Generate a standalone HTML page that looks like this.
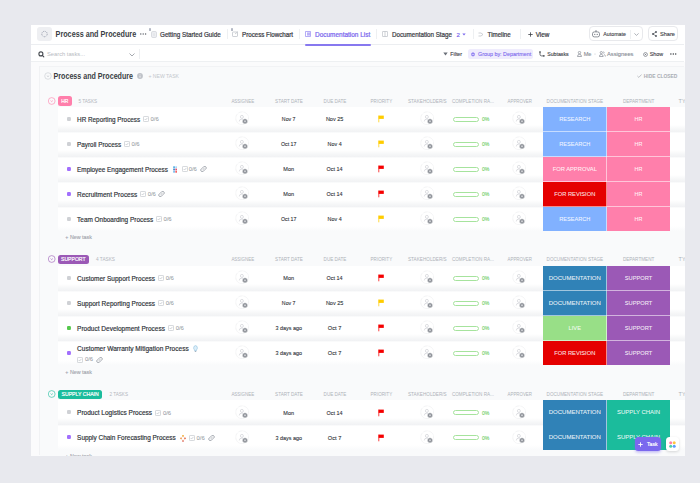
<!DOCTYPE html>
<html><head><meta charset="utf-8"><style>
html,body{margin:0;padding:0;}
body{width:700px;height:483px;overflow:hidden;background:#e8e9ee;position:relative;font-family:"Liberation Sans",sans-serif;}
.b{position:absolute;}
svg text{font-family:"Liberation Sans",sans-serif;}
</style></head><body>
<div class="b" style="left:31.4px;top:24.7px;width:653.2px;height:430.8px;background:#fff"></div>
<div class="b" style="left:31.4px;top:61.5px;width:653.2px;height:394px;background:#fbfbfc"></div>
<div class="b" style="left:39.3px;top:66.3px;width:644.9px;height:0.8px;background:#f2f3f5"></div>
<div class="b" style="left:39.3px;top:66.3px;width:0.8px;height:389px;background:#f1f2f4"></div>
<div class="b" style="left:40.1px;top:67.1px;width:644.5px;height:389px;background:#f9fafb"></div>
<div class="b" style="left:31.4px;top:44.3px;width:652.8px;height:1px;background:#eceef1"></div>
<div class="b" style="left:31.4px;top:60.6px;width:652.8px;height:0.9px;background:#eef0f2"></div>
<div class="b" style="left:37px;top:27px;width:15px;height:14px;background:#eeeff2;border-radius:3px"></div>
<svg class="b" style="left:40px;top:30px" width="9" height="8" viewBox="0 0 9 8"><circle cx="4.5" cy="4" r="2.7" fill="none" stroke="#8f95a6" stroke-width="0.8" stroke-dasharray="1.1 0.7"/></svg>
<svg class="b" style="left:139.6px;top:33px" width="7" height="2" viewBox="0 0 7 2"><g fill="#5b6068"><circle cx="0.8" cy="1" r="0.7"/><circle cx="3.2" cy="1" r="0.7"/><circle cx="5.6" cy="1" r="0.7"/></g></svg>
<div class="b" style="left:148.9px;top:28.4px;width:1.9px;height:2.4px;background:#b3b8c4;border-radius:0.4px"></div>
<svg class="b" style="left:150.5px;top:30.5px" width="6" height="7" viewBox="0 0 6 7"><rect x="0.6" y="0.6" width="4.8" height="5.8" rx="0.9" fill="#f1f2f5" stroke="#c9ccd3" stroke-width="0.7"/><path d="M3 2.2V5" stroke="#c9ccd3" stroke-width="0.6"/></svg>
<div class="b" style="left:227.2px;top:29px;width:0.6px;height:10px;background:#eef0f2"></div>
<div class="b" style="left:230.9px;top:28.4px;width:1.9px;height:2.4px;background:#b3b8c4;border-radius:0.4px"></div>
<svg class="b" style="left:231.5px;top:31px" width="7" height="6" viewBox="0 0 7 6"><rect x="0.5" y="1" width="5" height="4.5" rx="0.6" fill="none" stroke="#b9bdc4" stroke-width="0.7"/><path d="M3 3 L6 0.5" stroke="#b9bdc4" stroke-width="0.7"/></svg>
<div class="b" style="left:299.2px;top:29px;width:0.6px;height:10px;background:#eef0f2"></div>
<svg class="b" style="left:305px;top:31px" width="6" height="6" viewBox="0 0 6 6"><g stroke="#8b7cf0" stroke-width="0.7" fill="none"><rect x="0.4" y="0.4" width="5.2" height="5.2" rx="0.5"/><path d="M2 2H5M2 3H5M2 4H5"/></g></svg>
<div class="b" style="left:305px;top:44.1px;width:65.5px;height:1.5px;background:#8778ef;border-radius:1px"></div>
<div class="b" style="left:376.4px;top:29px;width:0.6px;height:10px;background:#eef0f2"></div>
<svg class="b" style="left:382px;top:31px" width="6" height="6" viewBox="0 0 6 6"><g stroke="#b9bdc4" stroke-width="0.7" fill="none"><rect x="0.4" y="0.5" width="5.2" height="5" rx="0.5"/><path d="M3 0.5V5.5"/></g></svg>
<svg class="b" style="left:462px;top:32.8px" width="4" height="3" viewBox="0 0 4 3"><path d="M0.3 0.4H3.7L2 2.6Z" fill="#7b68ee"/></svg>
<div class="b" style="left:472.8px;top:29px;width:0.6px;height:10px;background:#eef0f2"></div>
<svg class="b" style="left:478px;top:31.5px" width="6" height="5" viewBox="0 0 6 5"><path d="M0.5 1H3L5 2.5 3 4H0.5" fill="none" stroke="#b9bdc4" stroke-width="0.7"/></svg>
<div class="b" style="left:520.3px;top:29px;width:0.6px;height:10px;background:#eef0f2"></div>
<svg class="b" style="left:527.8px;top:31.6px" width="5" height="5" viewBox="0 0 5 5"><path d="M2.5 0.3V4.7M0.3 2.5H4.7" stroke="#3c4046" stroke-width="0.8"/></svg>
<div class="b" style="left:588.6px;top:26.4px;width:54.6px;height:14.6px;border:0.8px solid #e8e9ec;border-radius:4px;box-sizing:border-box;background:#fff"></div>
<svg class="b" style="left:592.4px;top:30px" width="8" height="7.5" viewBox="0 0 8 7.5"><g fill="none" stroke="#6b7079" stroke-width="0.75"><rect x="0.5" y="1.9" width="7" height="5" rx="1.8"/><path d="M4 1.9V0.8"/></g><circle cx="4" cy="0.7" r="0.55" fill="#6b7079"/><circle cx="2.8" cy="4.4" r="0.55" fill="#6b7079"/><circle cx="5.2" cy="4.4" r="0.55" fill="#6b7079"/></svg>
<div class="b" style="left:630px;top:29.5px;width:0.6px;height:9px;background:#eef0f2"></div>
<svg class="b" style="left:633.5px;top:32.5px" width="5" height="3" viewBox="0 0 5 3"><path d="M0.4 0.4L2.5 2.4 4.6 0.4" fill="none" stroke="#8b9099" stroke-width="0.7"/></svg>
<div class="b" style="left:648px;top:26.4px;width:30.3px;height:14.6px;border:0.8px solid #e8e9ec;border-radius:4px;box-sizing:border-box;background:#fff"></div>
<svg class="b" style="left:652.3px;top:31px" width="5" height="6" viewBox="0 0 5 6"><g fill="#4b5058"><circle cx="4" cy="1" r="0.9"/><circle cx="1" cy="3" r="0.9"/><circle cx="4" cy="5" r="0.9"/></g><path d="M4 1L1 3 4 5" stroke="#4b5058" stroke-width="0.6" fill="none"/></svg>
<svg class="b" style="left:37.8px;top:51.3px" width="7" height="7" viewBox="0 0 7 7"><circle cx="2.9" cy="2.9" r="2" fill="none" stroke="#45494f" stroke-width="1.1"/><path d="M4.4 4.4L5.8 5.8" stroke="#45494f" stroke-width="1.1" stroke-linecap="round"/></svg>
<svg class="b" style="left:129px;top:52.6px" width="6" height="4" viewBox="0 0 6 4"><path d="M0.5 0.5L3 3 5.5 0.5" fill="none" stroke="#8f949c" stroke-width="0.8"/></svg>
<div class="b" style="left:139px;top:48.5px;width:0.6px;height:10px;background:#eef0f2"></div>
<svg class="b" style="left:443.2px;top:52px" width="5" height="4" viewBox="0 0 5 4"><path d="M0.3 0.4H4.7L2.5 3.4Z" fill="#6b7079"/></svg>
<div class="b" style="left:468.1px;top:48.5px;width:65px;height:10.4px;background:#efecfd;border-radius:2.5px"></div>
<svg class="b" style="left:470.9px;top:51.6px" width="4" height="5" viewBox="0 0 4 5"><path d="M2 0.3L3.7 1.3V3.5L2 4.6 0.3 3.5V1.3Z" fill="#7b68ee" fill-opacity="0.85"/><circle cx="2" cy="2.45" r="0.7" fill="#efecfd"/></svg>
<svg class="b" style="left:539px;top:51px" width="6" height="6" viewBox="0 0 6 6"><path d="M1 0.6V3.3Q1 4.9 2.6 4.9H5" fill="none" stroke="#45494f" stroke-width="0.8"/><circle cx="1" cy="1" r="0.8" fill="#45494f"/><circle cx="4.9" cy="4.9" r="0.8" fill="#45494f"/></svg>
<svg class="b" style="left:577px;top:51.3px" width="5" height="6" viewBox="0 0 5 6"><circle cx="2.5" cy="1.6" r="1.2" fill="none" stroke="#858a93" stroke-width="0.7"/><path d="M0.5 5.5Q0.5 3.3 2.5 3.3 4.5 3.3 4.5 5.5Z" fill="none" stroke="#858a93" stroke-width="0.7"/></svg>
<svg class="b" style="left:594.4px;top:53.4px" width="2" height="2" viewBox="0 0 2 2"><circle cx="1" cy="1" r="0.5" fill="#b9bcc3"/></svg>
<svg class="b" style="left:599px;top:51.3px" width="7" height="6" viewBox="0 0 7 6"><g fill="none" stroke="#858a93" stroke-width="0.7"><circle cx="2.3" cy="1.6" r="1.1"/><path d="M0.4 5.5Q0.4 3.4 2.3 3.4 4.2 3.4 4.2 5.5Z"/><path d="M4.3 0.6A1.1 1.1 0 0 1 4.5 2.6M5.2 3.5Q6.4 3.9 6.4 5.5"/></g></svg>
<svg class="b" style="left:642.7px;top:51.6px" width="5" height="5" viewBox="0 0 5 5"><circle cx="2.5" cy="2.5" r="1.9" fill="none" stroke="#6b7079" stroke-width="0.7"/><circle cx="2.5" cy="2.5" r="0.6" fill="#6b7079"/></svg>
<svg class="b" style="left:670.3px;top:53px" width="7" height="2" viewBox="0 0 7 2"><g fill="#3c4046"><circle cx="0.9" cy="1" r="0.75"/><circle cx="3.3" cy="1" r="0.75"/><circle cx="5.7" cy="1" r="0.75"/></g></svg>
<svg class="b" style="left:43.6px;top:72.4px" width="8" height="8" viewBox="0 0 8 8"><circle cx="4" cy="4" r="3.3" fill="none" stroke="#cfd2d7" stroke-width="0.7"/><path d="M2.8 3.6L4 4.7 5.2 3.6" fill="none" stroke="#b5b9bf" stroke-width="0.6"/></svg>
<svg class="b" style="left:137.2px;top:72.9px" width="6" height="6" viewBox="0 0 6 6"><circle cx="3" cy="3" r="2.9" fill="#bfc2c8"/><path d="M3 2.6V4.6" stroke="#fff" stroke-width="0.8"/><circle cx="3" cy="1.6" r="0.45" fill="#fff"/></svg>
<svg class="b" style="left:636.8px;top:74.3px" width="5" height="4" viewBox="0 0 5 4"><path d="M0.4 2L1.8 3.4 4.6 0.5" fill="none" stroke="#a3a7ae" stroke-width="0.7"/></svg>
<svg class="b" style="left:48px;top:96.60000000000001px" width="8" height="8" viewBox="0 0 8 8"><circle cx="3.7" cy="4" r="3.4" fill="none" stroke="#ff7fab" stroke-opacity="0.75" stroke-width="0.8"/><path d="M2.6 3.6L3.7 4.6 4.8 3.6" fill="none" stroke="#ff7fab" stroke-width="0.65"/></svg>
<div class="b" style="left:57.8px;top:96.4px;width:14.1px;height:9.3px;background:#ff7fab;border-radius:2.5px"></div>
<div class="b" style="left:57.5px;top:106.5px;width:627.1px;height:25px;background:linear-gradient(#fff 0, #fff 72%, #f5f6f7 90%, #f1f2f4 100%)"></div>
<svg class="b" style="left:66px;top:115.60000000000001px" width="6" height="6" viewBox="0 0 6 6"><rect x="1" y="1.1" width="3.9" height="3.9" rx="1.1" fill="#cfd1d5"/></svg>
<svg class="b" style="left:143.4px;top:116.19999999999999px" width="6" height="6" viewBox="0 0 6 6"><rect x="0.4" y="0.4" width="5.2" height="5.2" rx="1" fill="none" stroke="#b4b8bf" stroke-width="0.6"/><path d="M1.6 3L2.6 4 4.4 1.9" fill="none" stroke="#b4b8bf" stroke-width="0.6"/></svg>
<svg class="b" style="left:235.4px;top:111.3px" width="14" height="14" viewBox="0 0 14 14"><circle cx="7.2" cy="7.3" r="6.4" fill="none" stroke="#dcdee2" stroke-width="0.55" stroke-dasharray="0.7 0.6"/><circle cx="6.9" cy="5.9" r="1.5" fill="none" stroke="#ccced3" stroke-width="0.65"/><path d="M4.3 10.4Q4.3 8.1 6.9 8.1 8.2 8.1 8.8 8.7" fill="none" stroke="#ccced3" stroke-width="0.65"/><circle cx="10" cy="10.3" r="2.6" fill="#8a8e95" stroke="#fff" stroke-width="0.5"/><path d="M10 9.2V11.4M8.9 10.3H11.1" stroke="#eceef0" stroke-width="0.6"/></svg>
<svg class="b" style="left:378.2px;top:114.9px" width="7" height="8" viewBox="0 0 7 8"><path d="M0.8 0.6V7.3" stroke="#ffcc00" stroke-width="1" stroke-opacity="0.75"/><path d="M0.6 0.6H5.8V3.9H0.6Z" fill="#ffcc00"/></svg>
<svg class="b" style="left:420px;top:111.3px" width="14" height="14" viewBox="0 0 14 14"><circle cx="7.2" cy="7.3" r="6.4" fill="none" stroke="#dcdee2" stroke-width="0.55" stroke-dasharray="0.7 0.6"/><circle cx="6.9" cy="5.9" r="1.5" fill="none" stroke="#ccced3" stroke-width="0.65"/><path d="M4.3 10.4Q4.3 8.1 6.9 8.1 8.2 8.1 8.8 8.7" fill="none" stroke="#ccced3" stroke-width="0.65"/><circle cx="10" cy="10.3" r="2.6" fill="#8a8e95" stroke="#fff" stroke-width="0.5"/><path d="M10 9.2V11.4M8.9 10.3H11.1" stroke="#eceef0" stroke-width="0.6"/></svg>
<div class="b" style="left:453.3px;top:116.5px;width:25.7px;height:5.2px;border:1.1px solid #a6e39d;border-radius:3px;box-sizing:border-box;background:#fff"></div>
<svg class="b" style="left:512.2px;top:111.3px" width="14" height="14" viewBox="0 0 14 14"><circle cx="7.2" cy="7.3" r="6.4" fill="none" stroke="#dcdee2" stroke-width="0.55" stroke-dasharray="0.7 0.6"/><circle cx="6.9" cy="5.9" r="1.5" fill="none" stroke="#ccced3" stroke-width="0.65"/><path d="M4.3 10.4Q4.3 8.1 6.9 8.1 8.2 8.1 8.8 8.7" fill="none" stroke="#ccced3" stroke-width="0.65"/><circle cx="10" cy="10.3" r="2.6" fill="#8a8e95" stroke="#fff" stroke-width="0.5"/><path d="M10 9.2V11.4M8.9 10.3H11.1" stroke="#eceef0" stroke-width="0.6"/></svg>
<div class="b" style="left:543px;top:106.5px;width:63.5px;height:25px;background:#81b1ff"></div>
<div class="b" style="left:606.5px;top:106.5px;width:63.5px;height:25px;background:#ff7fab"></div>
<div class="b" style="left:606.2px;top:106.5px;width:0.7px;height:25px;background:rgba(255,255,255,0.55)"></div>
<div class="b" style="left:543px;top:130.8px;width:127px;height:0.8px;background:rgba(255,255,255,0.55)"></div>
<div class="b" style="left:57.5px;top:131.5px;width:627.1px;height:25px;background:linear-gradient(#f7f8f9 0, #fff 6%, #fff 72%, #f5f6f7 90%, #f1f2f4 100%)"></div>
<svg class="b" style="left:66px;top:140.6px" width="6" height="6" viewBox="0 0 6 6"><rect x="1" y="1.1" width="3.9" height="3.9" rx="1.1" fill="#cfd1d5"/></svg>
<svg class="b" style="left:124.3px;top:141.2px" width="6" height="6" viewBox="0 0 6 6"><rect x="0.4" y="0.4" width="5.2" height="5.2" rx="1" fill="none" stroke="#b4b8bf" stroke-width="0.6"/><path d="M1.6 3L2.6 4 4.4 1.9" fill="none" stroke="#b4b8bf" stroke-width="0.6"/></svg>
<svg class="b" style="left:235.4px;top:136.29999999999998px" width="14" height="14" viewBox="0 0 14 14"><circle cx="7.2" cy="7.3" r="6.4" fill="none" stroke="#dcdee2" stroke-width="0.55" stroke-dasharray="0.7 0.6"/><circle cx="6.9" cy="5.9" r="1.5" fill="none" stroke="#ccced3" stroke-width="0.65"/><path d="M4.3 10.4Q4.3 8.1 6.9 8.1 8.2 8.1 8.8 8.7" fill="none" stroke="#ccced3" stroke-width="0.65"/><circle cx="10" cy="10.3" r="2.6" fill="#8a8e95" stroke="#fff" stroke-width="0.5"/><path d="M10 9.2V11.4M8.9 10.3H11.1" stroke="#eceef0" stroke-width="0.6"/></svg>
<svg class="b" style="left:378.2px;top:139.89999999999998px" width="7" height="8" viewBox="0 0 7 8"><path d="M0.8 0.6V7.3" stroke="#ffcc00" stroke-width="1" stroke-opacity="0.75"/><path d="M0.6 0.6H5.8V3.9H0.6Z" fill="#ffcc00"/></svg>
<svg class="b" style="left:420px;top:136.29999999999998px" width="14" height="14" viewBox="0 0 14 14"><circle cx="7.2" cy="7.3" r="6.4" fill="none" stroke="#dcdee2" stroke-width="0.55" stroke-dasharray="0.7 0.6"/><circle cx="6.9" cy="5.9" r="1.5" fill="none" stroke="#ccced3" stroke-width="0.65"/><path d="M4.3 10.4Q4.3 8.1 6.9 8.1 8.2 8.1 8.8 8.7" fill="none" stroke="#ccced3" stroke-width="0.65"/><circle cx="10" cy="10.3" r="2.6" fill="#8a8e95" stroke="#fff" stroke-width="0.5"/><path d="M10 9.2V11.4M8.9 10.3H11.1" stroke="#eceef0" stroke-width="0.6"/></svg>
<div class="b" style="left:453.3px;top:141.5px;width:25.7px;height:5.2px;border:1.1px solid #a6e39d;border-radius:3px;box-sizing:border-box;background:#fff"></div>
<svg class="b" style="left:512.2px;top:136.29999999999998px" width="14" height="14" viewBox="0 0 14 14"><circle cx="7.2" cy="7.3" r="6.4" fill="none" stroke="#dcdee2" stroke-width="0.55" stroke-dasharray="0.7 0.6"/><circle cx="6.9" cy="5.9" r="1.5" fill="none" stroke="#ccced3" stroke-width="0.65"/><path d="M4.3 10.4Q4.3 8.1 6.9 8.1 8.2 8.1 8.8 8.7" fill="none" stroke="#ccced3" stroke-width="0.65"/><circle cx="10" cy="10.3" r="2.6" fill="#8a8e95" stroke="#fff" stroke-width="0.5"/><path d="M10 9.2V11.4M8.9 10.3H11.1" stroke="#eceef0" stroke-width="0.6"/></svg>
<div class="b" style="left:543px;top:131.5px;width:63.5px;height:25px;background:#81b1ff"></div>
<div class="b" style="left:606.5px;top:131.5px;width:63.5px;height:25px;background:#ff7fab"></div>
<div class="b" style="left:606.2px;top:131.5px;width:0.7px;height:25px;background:rgba(255,255,255,0.55)"></div>
<div class="b" style="left:543px;top:155.8px;width:127px;height:0.8px;background:rgba(255,255,255,0.55)"></div>
<div class="b" style="left:57.5px;top:156.5px;width:627.1px;height:25px;background:linear-gradient(#f7f8f9 0, #fff 6%, #fff 72%, #f5f6f7 90%, #f1f2f4 100%)"></div>
<svg class="b" style="left:66px;top:165.6px" width="6" height="6" viewBox="0 0 6 6"><rect x="1" y="1.1" width="3.9" height="3.9" rx="1.1" fill="#a26ffd"/></svg>
<svg class="b" style="left:173.2px;top:165.7px" width="5" height="7" viewBox="0 0 5 7"><rect x="0.3" y="0.3" width="1.5" height="1.8" fill="#3aa0e0"/><rect x="2.4" y="0.3" width="1.5" height="1.8" fill="#9fd4f4"/><rect x="0.3" y="2.6" width="1.5" height="1.8" fill="#1e6fc0"/><rect x="2.4" y="2.6" width="1.5" height="1.8" fill="#e04060"/><rect x="0.3" y="4.9" width="1.5" height="1.8" fill="#60b0e8"/><rect x="2.4" y="4.9" width="1.5" height="1.8" fill="#f05050"/></svg>
<svg class="b" style="left:182.3px;top:166.2px" width="6" height="6" viewBox="0 0 6 6"><rect x="0.4" y="0.4" width="5.2" height="5.2" rx="1" fill="none" stroke="#b4b8bf" stroke-width="0.6"/><path d="M1.6 3L2.6 4 4.4 1.9" fill="none" stroke="#b4b8bf" stroke-width="0.6"/></svg>
<svg class="b" style="left:199.6px;top:166.2px" width="7" height="6" viewBox="0 0 7 6"><g transform="rotate(-40 3.5 3)"><rect x="0.3" y="1.5" width="6.4" height="3" rx="1.5" fill="none" stroke="#a9adb4" stroke-width="0.9"/><path d="M2.3 3H4.9" stroke="#a9adb4" stroke-width="0.8"/></g></svg>
<svg class="b" style="left:235.4px;top:161.29999999999998px" width="14" height="14" viewBox="0 0 14 14"><circle cx="7.2" cy="7.3" r="6.4" fill="none" stroke="#dcdee2" stroke-width="0.55" stroke-dasharray="0.7 0.6"/><circle cx="6.9" cy="5.9" r="1.5" fill="none" stroke="#ccced3" stroke-width="0.65"/><path d="M4.3 10.4Q4.3 8.1 6.9 8.1 8.2 8.1 8.8 8.7" fill="none" stroke="#ccced3" stroke-width="0.65"/><circle cx="10" cy="10.3" r="2.6" fill="#8a8e95" stroke="#fff" stroke-width="0.5"/><path d="M10 9.2V11.4M8.9 10.3H11.1" stroke="#eceef0" stroke-width="0.6"/></svg>
<svg class="b" style="left:378.2px;top:164.89999999999998px" width="7" height="8" viewBox="0 0 7 8"><path d="M0.8 0.6V7.3" stroke="#f50000" stroke-width="1" stroke-opacity="0.75"/><path d="M0.6 0.6H5.8V3.9H0.6Z" fill="#f50000"/></svg>
<svg class="b" style="left:420px;top:161.29999999999998px" width="14" height="14" viewBox="0 0 14 14"><circle cx="7.2" cy="7.3" r="6.4" fill="none" stroke="#dcdee2" stroke-width="0.55" stroke-dasharray="0.7 0.6"/><circle cx="6.9" cy="5.9" r="1.5" fill="none" stroke="#ccced3" stroke-width="0.65"/><path d="M4.3 10.4Q4.3 8.1 6.9 8.1 8.2 8.1 8.8 8.7" fill="none" stroke="#ccced3" stroke-width="0.65"/><circle cx="10" cy="10.3" r="2.6" fill="#8a8e95" stroke="#fff" stroke-width="0.5"/><path d="M10 9.2V11.4M8.9 10.3H11.1" stroke="#eceef0" stroke-width="0.6"/></svg>
<div class="b" style="left:453.3px;top:166.5px;width:25.7px;height:5.2px;border:1.1px solid #a6e39d;border-radius:3px;box-sizing:border-box;background:#fff"></div>
<svg class="b" style="left:512.2px;top:161.29999999999998px" width="14" height="14" viewBox="0 0 14 14"><circle cx="7.2" cy="7.3" r="6.4" fill="none" stroke="#dcdee2" stroke-width="0.55" stroke-dasharray="0.7 0.6"/><circle cx="6.9" cy="5.9" r="1.5" fill="none" stroke="#ccced3" stroke-width="0.65"/><path d="M4.3 10.4Q4.3 8.1 6.9 8.1 8.2 8.1 8.8 8.7" fill="none" stroke="#ccced3" stroke-width="0.65"/><circle cx="10" cy="10.3" r="2.6" fill="#8a8e95" stroke="#fff" stroke-width="0.5"/><path d="M10 9.2V11.4M8.9 10.3H11.1" stroke="#eceef0" stroke-width="0.6"/></svg>
<div class="b" style="left:543px;top:156.5px;width:63.5px;height:25px;background:#ff7fab"></div>
<div class="b" style="left:606.5px;top:156.5px;width:63.5px;height:25px;background:#ff7fab"></div>
<div class="b" style="left:606.2px;top:156.5px;width:0.7px;height:25px;background:rgba(255,255,255,0.55)"></div>
<div class="b" style="left:543px;top:180.8px;width:127px;height:0.8px;background:rgba(255,255,255,0.55)"></div>
<div class="b" style="left:57.5px;top:181.5px;width:627.1px;height:25px;background:linear-gradient(#f7f8f9 0, #fff 6%, #fff 72%, #f5f6f7 90%, #f1f2f4 100%)"></div>
<svg class="b" style="left:66px;top:190.6px" width="6" height="6" viewBox="0 0 6 6"><rect x="1" y="1.1" width="3.9" height="3.9" rx="1.1" fill="#a26ffd"/></svg>
<svg class="b" style="left:140px;top:191.2px" width="6" height="6" viewBox="0 0 6 6"><rect x="0.4" y="0.4" width="5.2" height="5.2" rx="1" fill="none" stroke="#b4b8bf" stroke-width="0.6"/><path d="M1.6 3L2.6 4 4.4 1.9" fill="none" stroke="#b4b8bf" stroke-width="0.6"/></svg>
<svg class="b" style="left:158.4px;top:191.2px" width="7" height="6" viewBox="0 0 7 6"><g transform="rotate(-40 3.5 3)"><rect x="0.3" y="1.5" width="6.4" height="3" rx="1.5" fill="none" stroke="#a9adb4" stroke-width="0.9"/><path d="M2.3 3H4.9" stroke="#a9adb4" stroke-width="0.8"/></g></svg>
<svg class="b" style="left:235.4px;top:186.29999999999998px" width="14" height="14" viewBox="0 0 14 14"><circle cx="7.2" cy="7.3" r="6.4" fill="none" stroke="#dcdee2" stroke-width="0.55" stroke-dasharray="0.7 0.6"/><circle cx="6.9" cy="5.9" r="1.5" fill="none" stroke="#ccced3" stroke-width="0.65"/><path d="M4.3 10.4Q4.3 8.1 6.9 8.1 8.2 8.1 8.8 8.7" fill="none" stroke="#ccced3" stroke-width="0.65"/><circle cx="10" cy="10.3" r="2.6" fill="#8a8e95" stroke="#fff" stroke-width="0.5"/><path d="M10 9.2V11.4M8.9 10.3H11.1" stroke="#eceef0" stroke-width="0.6"/></svg>
<svg class="b" style="left:378.2px;top:189.89999999999998px" width="7" height="8" viewBox="0 0 7 8"><path d="M0.8 0.6V7.3" stroke="#f50000" stroke-width="1" stroke-opacity="0.75"/><path d="M0.6 0.6H5.8V3.9H0.6Z" fill="#f50000"/></svg>
<svg class="b" style="left:420px;top:186.29999999999998px" width="14" height="14" viewBox="0 0 14 14"><circle cx="7.2" cy="7.3" r="6.4" fill="none" stroke="#dcdee2" stroke-width="0.55" stroke-dasharray="0.7 0.6"/><circle cx="6.9" cy="5.9" r="1.5" fill="none" stroke="#ccced3" stroke-width="0.65"/><path d="M4.3 10.4Q4.3 8.1 6.9 8.1 8.2 8.1 8.8 8.7" fill="none" stroke="#ccced3" stroke-width="0.65"/><circle cx="10" cy="10.3" r="2.6" fill="#8a8e95" stroke="#fff" stroke-width="0.5"/><path d="M10 9.2V11.4M8.9 10.3H11.1" stroke="#eceef0" stroke-width="0.6"/></svg>
<div class="b" style="left:453.3px;top:191.5px;width:25.7px;height:5.2px;border:1.1px solid #a6e39d;border-radius:3px;box-sizing:border-box;background:#fff"></div>
<svg class="b" style="left:512.2px;top:186.29999999999998px" width="14" height="14" viewBox="0 0 14 14"><circle cx="7.2" cy="7.3" r="6.4" fill="none" stroke="#dcdee2" stroke-width="0.55" stroke-dasharray="0.7 0.6"/><circle cx="6.9" cy="5.9" r="1.5" fill="none" stroke="#ccced3" stroke-width="0.65"/><path d="M4.3 10.4Q4.3 8.1 6.9 8.1 8.2 8.1 8.8 8.7" fill="none" stroke="#ccced3" stroke-width="0.65"/><circle cx="10" cy="10.3" r="2.6" fill="#8a8e95" stroke="#fff" stroke-width="0.5"/><path d="M10 9.2V11.4M8.9 10.3H11.1" stroke="#eceef0" stroke-width="0.6"/></svg>
<div class="b" style="left:543px;top:181.5px;width:63.5px;height:25px;background:#e50000"></div>
<div class="b" style="left:606.5px;top:181.5px;width:63.5px;height:25px;background:#ff7fab"></div>
<div class="b" style="left:606.2px;top:181.5px;width:0.7px;height:25px;background:rgba(255,255,255,0.55)"></div>
<div class="b" style="left:543px;top:205.8px;width:127px;height:0.8px;background:rgba(255,255,255,0.55)"></div>
<div class="b" style="left:57.5px;top:206.5px;width:627.1px;height:24.5px;background:linear-gradient(#f7f8f9 0, #fff 6%, #fff 80%, #f9fafb 100%)"></div>
<svg class="b" style="left:66px;top:215.6px" width="6" height="6" viewBox="0 0 6 6"><rect x="1" y="1.1" width="3.9" height="3.9" rx="1.1" fill="#cfd1d5"/></svg>
<svg class="b" style="left:155.7px;top:216.2px" width="6" height="6" viewBox="0 0 6 6"><rect x="0.4" y="0.4" width="5.2" height="5.2" rx="1" fill="none" stroke="#b4b8bf" stroke-width="0.6"/><path d="M1.6 3L2.6 4 4.4 1.9" fill="none" stroke="#b4b8bf" stroke-width="0.6"/></svg>
<svg class="b" style="left:235.4px;top:211.29999999999998px" width="14" height="14" viewBox="0 0 14 14"><circle cx="7.2" cy="7.3" r="6.4" fill="none" stroke="#dcdee2" stroke-width="0.55" stroke-dasharray="0.7 0.6"/><circle cx="6.9" cy="5.9" r="1.5" fill="none" stroke="#ccced3" stroke-width="0.65"/><path d="M4.3 10.4Q4.3 8.1 6.9 8.1 8.2 8.1 8.8 8.7" fill="none" stroke="#ccced3" stroke-width="0.65"/><circle cx="10" cy="10.3" r="2.6" fill="#8a8e95" stroke="#fff" stroke-width="0.5"/><path d="M10 9.2V11.4M8.9 10.3H11.1" stroke="#eceef0" stroke-width="0.6"/></svg>
<svg class="b" style="left:378.2px;top:214.89999999999998px" width="7" height="8" viewBox="0 0 7 8"><path d="M0.8 0.6V7.3" stroke="#ffcc00" stroke-width="1" stroke-opacity="0.75"/><path d="M0.6 0.6H5.8V3.9H0.6Z" fill="#ffcc00"/></svg>
<svg class="b" style="left:420px;top:211.29999999999998px" width="14" height="14" viewBox="0 0 14 14"><circle cx="7.2" cy="7.3" r="6.4" fill="none" stroke="#dcdee2" stroke-width="0.55" stroke-dasharray="0.7 0.6"/><circle cx="6.9" cy="5.9" r="1.5" fill="none" stroke="#ccced3" stroke-width="0.65"/><path d="M4.3 10.4Q4.3 8.1 6.9 8.1 8.2 8.1 8.8 8.7" fill="none" stroke="#ccced3" stroke-width="0.65"/><circle cx="10" cy="10.3" r="2.6" fill="#8a8e95" stroke="#fff" stroke-width="0.5"/><path d="M10 9.2V11.4M8.9 10.3H11.1" stroke="#eceef0" stroke-width="0.6"/></svg>
<div class="b" style="left:453.3px;top:216.5px;width:25.7px;height:5.2px;border:1.1px solid #a6e39d;border-radius:3px;box-sizing:border-box;background:#fff"></div>
<svg class="b" style="left:512.2px;top:211.29999999999998px" width="14" height="14" viewBox="0 0 14 14"><circle cx="7.2" cy="7.3" r="6.4" fill="none" stroke="#dcdee2" stroke-width="0.55" stroke-dasharray="0.7 0.6"/><circle cx="6.9" cy="5.9" r="1.5" fill="none" stroke="#ccced3" stroke-width="0.65"/><path d="M4.3 10.4Q4.3 8.1 6.9 8.1 8.2 8.1 8.8 8.7" fill="none" stroke="#ccced3" stroke-width="0.65"/><circle cx="10" cy="10.3" r="2.6" fill="#8a8e95" stroke="#fff" stroke-width="0.5"/><path d="M10 9.2V11.4M8.9 10.3H11.1" stroke="#eceef0" stroke-width="0.6"/></svg>
<div class="b" style="left:543px;top:206.5px;width:63.5px;height:24.5px;background:#81b1ff"></div>
<div class="b" style="left:606.5px;top:206.5px;width:63.5px;height:24.5px;background:#ff7fab"></div>
<div class="b" style="left:606.2px;top:206.5px;width:0.7px;height:24.5px;background:rgba(255,255,255,0.55)"></div>
<svg class="b" style="left:48px;top:254.7px" width="8" height="8" viewBox="0 0 8 8"><circle cx="3.7" cy="4" r="3.4" fill="none" stroke="#9b59b6" stroke-opacity="0.75" stroke-width="0.8"/><path d="M2.6 3.6L3.7 4.6 4.8 3.6" fill="none" stroke="#9b59b6" stroke-width="0.65"/></svg>
<div class="b" style="left:57.8px;top:254.5px;width:31px;height:9.3px;background:#9b59b6;border-radius:2.5px"></div>
<div class="b" style="left:57.5px;top:265.5px;width:627.1px;height:25px;background:linear-gradient(#fff 0, #fff 72%, #f5f6f7 90%, #f1f2f4 100%)"></div>
<svg class="b" style="left:66px;top:274.59999999999997px" width="6" height="6" viewBox="0 0 6 6"><rect x="1" y="1.1" width="3.9" height="3.9" rx="1.1" fill="#cfd1d5"/></svg>
<svg class="b" style="left:158px;top:275.20000000000005px" width="6" height="6" viewBox="0 0 6 6"><rect x="0.4" y="0.4" width="5.2" height="5.2" rx="1" fill="none" stroke="#b4b8bf" stroke-width="0.6"/><path d="M1.6 3L2.6 4 4.4 1.9" fill="none" stroke="#b4b8bf" stroke-width="0.6"/></svg>
<svg class="b" style="left:235.4px;top:270.3px" width="14" height="14" viewBox="0 0 14 14"><circle cx="7.2" cy="7.3" r="6.4" fill="none" stroke="#dcdee2" stroke-width="0.55" stroke-dasharray="0.7 0.6"/><circle cx="6.9" cy="5.9" r="1.5" fill="none" stroke="#ccced3" stroke-width="0.65"/><path d="M4.3 10.4Q4.3 8.1 6.9 8.1 8.2 8.1 8.8 8.7" fill="none" stroke="#ccced3" stroke-width="0.65"/><circle cx="10" cy="10.3" r="2.6" fill="#8a8e95" stroke="#fff" stroke-width="0.5"/><path d="M10 9.2V11.4M8.9 10.3H11.1" stroke="#eceef0" stroke-width="0.6"/></svg>
<svg class="b" style="left:378.2px;top:273.9px" width="7" height="8" viewBox="0 0 7 8"><path d="M0.8 0.6V7.3" stroke="#f50000" stroke-width="1" stroke-opacity="0.75"/><path d="M0.6 0.6H5.8V3.9H0.6Z" fill="#f50000"/></svg>
<svg class="b" style="left:420px;top:270.3px" width="14" height="14" viewBox="0 0 14 14"><circle cx="7.2" cy="7.3" r="6.4" fill="none" stroke="#dcdee2" stroke-width="0.55" stroke-dasharray="0.7 0.6"/><circle cx="6.9" cy="5.9" r="1.5" fill="none" stroke="#ccced3" stroke-width="0.65"/><path d="M4.3 10.4Q4.3 8.1 6.9 8.1 8.2 8.1 8.8 8.7" fill="none" stroke="#ccced3" stroke-width="0.65"/><circle cx="10" cy="10.3" r="2.6" fill="#8a8e95" stroke="#fff" stroke-width="0.5"/><path d="M10 9.2V11.4M8.9 10.3H11.1" stroke="#eceef0" stroke-width="0.6"/></svg>
<div class="b" style="left:453.3px;top:275.5px;width:25.7px;height:5.2px;border:1.1px solid #a6e39d;border-radius:3px;box-sizing:border-box;background:#fff"></div>
<svg class="b" style="left:512.2px;top:270.3px" width="14" height="14" viewBox="0 0 14 14"><circle cx="7.2" cy="7.3" r="6.4" fill="none" stroke="#dcdee2" stroke-width="0.55" stroke-dasharray="0.7 0.6"/><circle cx="6.9" cy="5.9" r="1.5" fill="none" stroke="#ccced3" stroke-width="0.65"/><path d="M4.3 10.4Q4.3 8.1 6.9 8.1 8.2 8.1 8.8 8.7" fill="none" stroke="#ccced3" stroke-width="0.65"/><circle cx="10" cy="10.3" r="2.6" fill="#8a8e95" stroke="#fff" stroke-width="0.5"/><path d="M10 9.2V11.4M8.9 10.3H11.1" stroke="#eceef0" stroke-width="0.6"/></svg>
<div class="b" style="left:543px;top:265.5px;width:63.5px;height:25px;background:#3082b7"></div>
<div class="b" style="left:606.5px;top:265.5px;width:63.5px;height:25px;background:#9b59b6"></div>
<div class="b" style="left:606.2px;top:265.5px;width:0.7px;height:25px;background:rgba(255,255,255,0.55)"></div>
<div class="b" style="left:543px;top:289.8px;width:127px;height:0.8px;background:rgba(255,255,255,0.55)"></div>
<div class="b" style="left:57.5px;top:290.5px;width:627.1px;height:25px;background:linear-gradient(#f7f8f9 0, #fff 6%, #fff 72%, #f5f6f7 90%, #f1f2f4 100%)"></div>
<svg class="b" style="left:66px;top:299.59999999999997px" width="6" height="6" viewBox="0 0 6 6"><rect x="1" y="1.1" width="3.9" height="3.9" rx="1.1" fill="#cfd1d5"/></svg>
<svg class="b" style="left:158px;top:300.20000000000005px" width="6" height="6" viewBox="0 0 6 6"><rect x="0.4" y="0.4" width="5.2" height="5.2" rx="1" fill="none" stroke="#b4b8bf" stroke-width="0.6"/><path d="M1.6 3L2.6 4 4.4 1.9" fill="none" stroke="#b4b8bf" stroke-width="0.6"/></svg>
<svg class="b" style="left:235.4px;top:295.3px" width="14" height="14" viewBox="0 0 14 14"><circle cx="7.2" cy="7.3" r="6.4" fill="none" stroke="#dcdee2" stroke-width="0.55" stroke-dasharray="0.7 0.6"/><circle cx="6.9" cy="5.9" r="1.5" fill="none" stroke="#ccced3" stroke-width="0.65"/><path d="M4.3 10.4Q4.3 8.1 6.9 8.1 8.2 8.1 8.8 8.7" fill="none" stroke="#ccced3" stroke-width="0.65"/><circle cx="10" cy="10.3" r="2.6" fill="#8a8e95" stroke="#fff" stroke-width="0.5"/><path d="M10 9.2V11.4M8.9 10.3H11.1" stroke="#eceef0" stroke-width="0.6"/></svg>
<svg class="b" style="left:378.2px;top:298.9px" width="7" height="8" viewBox="0 0 7 8"><path d="M0.8 0.6V7.3" stroke="#ffcc00" stroke-width="1" stroke-opacity="0.75"/><path d="M0.6 0.6H5.8V3.9H0.6Z" fill="#ffcc00"/></svg>
<svg class="b" style="left:420px;top:295.3px" width="14" height="14" viewBox="0 0 14 14"><circle cx="7.2" cy="7.3" r="6.4" fill="none" stroke="#dcdee2" stroke-width="0.55" stroke-dasharray="0.7 0.6"/><circle cx="6.9" cy="5.9" r="1.5" fill="none" stroke="#ccced3" stroke-width="0.65"/><path d="M4.3 10.4Q4.3 8.1 6.9 8.1 8.2 8.1 8.8 8.7" fill="none" stroke="#ccced3" stroke-width="0.65"/><circle cx="10" cy="10.3" r="2.6" fill="#8a8e95" stroke="#fff" stroke-width="0.5"/><path d="M10 9.2V11.4M8.9 10.3H11.1" stroke="#eceef0" stroke-width="0.6"/></svg>
<div class="b" style="left:453.3px;top:300.5px;width:25.7px;height:5.2px;border:1.1px solid #a6e39d;border-radius:3px;box-sizing:border-box;background:#fff"></div>
<svg class="b" style="left:512.2px;top:295.3px" width="14" height="14" viewBox="0 0 14 14"><circle cx="7.2" cy="7.3" r="6.4" fill="none" stroke="#dcdee2" stroke-width="0.55" stroke-dasharray="0.7 0.6"/><circle cx="6.9" cy="5.9" r="1.5" fill="none" stroke="#ccced3" stroke-width="0.65"/><path d="M4.3 10.4Q4.3 8.1 6.9 8.1 8.2 8.1 8.8 8.7" fill="none" stroke="#ccced3" stroke-width="0.65"/><circle cx="10" cy="10.3" r="2.6" fill="#8a8e95" stroke="#fff" stroke-width="0.5"/><path d="M10 9.2V11.4M8.9 10.3H11.1" stroke="#eceef0" stroke-width="0.6"/></svg>
<div class="b" style="left:543px;top:290.5px;width:63.5px;height:25px;background:#3082b7"></div>
<div class="b" style="left:606.5px;top:290.5px;width:63.5px;height:25px;background:#9b59b6"></div>
<div class="b" style="left:606.2px;top:290.5px;width:0.7px;height:25px;background:rgba(255,255,255,0.55)"></div>
<div class="b" style="left:543px;top:314.8px;width:127px;height:0.8px;background:rgba(255,255,255,0.55)"></div>
<div class="b" style="left:57.5px;top:315.5px;width:627.1px;height:25px;background:linear-gradient(#f7f8f9 0, #fff 6%, #fff 72%, #f5f6f7 90%, #f1f2f4 100%)"></div>
<svg class="b" style="left:66px;top:324.59999999999997px" width="6" height="6" viewBox="0 0 6 6"><rect x="1" y="1.1" width="3.9" height="3.9" rx="1.1" fill="#55c84c"/></svg>
<svg class="b" style="left:167.7px;top:325.20000000000005px" width="6" height="6" viewBox="0 0 6 6"><rect x="0.4" y="0.4" width="5.2" height="5.2" rx="1" fill="none" stroke="#b4b8bf" stroke-width="0.6"/><path d="M1.6 3L2.6 4 4.4 1.9" fill="none" stroke="#b4b8bf" stroke-width="0.6"/></svg>
<svg class="b" style="left:235.4px;top:320.3px" width="14" height="14" viewBox="0 0 14 14"><circle cx="7.2" cy="7.3" r="6.4" fill="none" stroke="#dcdee2" stroke-width="0.55" stroke-dasharray="0.7 0.6"/><circle cx="6.9" cy="5.9" r="1.5" fill="none" stroke="#ccced3" stroke-width="0.65"/><path d="M4.3 10.4Q4.3 8.1 6.9 8.1 8.2 8.1 8.8 8.7" fill="none" stroke="#ccced3" stroke-width="0.65"/><circle cx="10" cy="10.3" r="2.6" fill="#8a8e95" stroke="#fff" stroke-width="0.5"/><path d="M10 9.2V11.4M8.9 10.3H11.1" stroke="#eceef0" stroke-width="0.6"/></svg>
<svg class="b" style="left:378.2px;top:323.9px" width="7" height="8" viewBox="0 0 7 8"><path d="M0.8 0.6V7.3" stroke="#f50000" stroke-width="1" stroke-opacity="0.75"/><path d="M0.6 0.6H5.8V3.9H0.6Z" fill="#f50000"/></svg>
<svg class="b" style="left:420px;top:320.3px" width="14" height="14" viewBox="0 0 14 14"><circle cx="7.2" cy="7.3" r="6.4" fill="none" stroke="#dcdee2" stroke-width="0.55" stroke-dasharray="0.7 0.6"/><circle cx="6.9" cy="5.9" r="1.5" fill="none" stroke="#ccced3" stroke-width="0.65"/><path d="M4.3 10.4Q4.3 8.1 6.9 8.1 8.2 8.1 8.8 8.7" fill="none" stroke="#ccced3" stroke-width="0.65"/><circle cx="10" cy="10.3" r="2.6" fill="#8a8e95" stroke="#fff" stroke-width="0.5"/><path d="M10 9.2V11.4M8.9 10.3H11.1" stroke="#eceef0" stroke-width="0.6"/></svg>
<div class="b" style="left:453.3px;top:325.5px;width:25.7px;height:5.2px;border:1.1px solid #a6e39d;border-radius:3px;box-sizing:border-box;background:#fff"></div>
<svg class="b" style="left:512.2px;top:320.3px" width="14" height="14" viewBox="0 0 14 14"><circle cx="7.2" cy="7.3" r="6.4" fill="none" stroke="#dcdee2" stroke-width="0.55" stroke-dasharray="0.7 0.6"/><circle cx="6.9" cy="5.9" r="1.5" fill="none" stroke="#ccced3" stroke-width="0.65"/><path d="M4.3 10.4Q4.3 8.1 6.9 8.1 8.2 8.1 8.8 8.7" fill="none" stroke="#ccced3" stroke-width="0.65"/><circle cx="10" cy="10.3" r="2.6" fill="#8a8e95" stroke="#fff" stroke-width="0.5"/><path d="M10 9.2V11.4M8.9 10.3H11.1" stroke="#eceef0" stroke-width="0.6"/></svg>
<div class="b" style="left:543px;top:315.5px;width:63.5px;height:25px;background:#98df87"></div>
<div class="b" style="left:606.5px;top:315.5px;width:63.5px;height:25px;background:#9b59b6"></div>
<div class="b" style="left:606.2px;top:315.5px;width:0.7px;height:25px;background:rgba(255,255,255,0.55)"></div>
<div class="b" style="left:543px;top:339.8px;width:127px;height:0.8px;background:rgba(255,255,255,0.55)"></div>
<div class="b" style="left:57.5px;top:340.5px;width:627.1px;height:24.5px;background:linear-gradient(#f7f8f9 0, #fff 6%, #fff 80%, #f9fafb 100%)"></div>
<svg class="b" style="left:66px;top:349.59999999999997px" width="6" height="6" viewBox="0 0 6 6"><rect x="1" y="1.1" width="3.9" height="3.9" rx="1.1" fill="#a26ffd"/></svg>
<svg class="b" style="left:192.8px;top:344.80000000000007px" width="5" height="7" viewBox="0 0 5 7"><path d="M2.5 0.6Q4.5 0.8 4.4 3 4.3 4.3 3.4 4.9V5.8H1.6V4.9Q0.6 4.3 0.6 3 0.6 0.8 2.5 0.6Z" fill="#dceefa" stroke="#7fb8d8" stroke-width="0.5"/><rect x="1.8" y="5.9" width="1.4" height="0.8" fill="#8898a8"/></svg>
<svg class="b" style="left:77.1px;top:356.5px" width="6" height="6" viewBox="0 0 6 6"><rect x="0.4" y="0.4" width="5.2" height="5.2" rx="1" fill="none" stroke="#b4b8bf" stroke-width="0.6"/><path d="M1.6 3L2.6 4 4.4 1.9" fill="none" stroke="#b4b8bf" stroke-width="0.6"/></svg>
<svg class="b" style="left:95.5px;top:356.5px" width="7" height="6" viewBox="0 0 7 6"><g transform="rotate(-40 3.5 3)"><rect x="0.3" y="1.5" width="6.4" height="3" rx="1.5" fill="none" stroke="#a9adb4" stroke-width="0.9"/><path d="M2.3 3H4.9" stroke="#a9adb4" stroke-width="0.8"/></g></svg>
<svg class="b" style="left:235.4px;top:345.3px" width="14" height="14" viewBox="0 0 14 14"><circle cx="7.2" cy="7.3" r="6.4" fill="none" stroke="#dcdee2" stroke-width="0.55" stroke-dasharray="0.7 0.6"/><circle cx="6.9" cy="5.9" r="1.5" fill="none" stroke="#ccced3" stroke-width="0.65"/><path d="M4.3 10.4Q4.3 8.1 6.9 8.1 8.2 8.1 8.8 8.7" fill="none" stroke="#ccced3" stroke-width="0.65"/><circle cx="10" cy="10.3" r="2.6" fill="#8a8e95" stroke="#fff" stroke-width="0.5"/><path d="M10 9.2V11.4M8.9 10.3H11.1" stroke="#eceef0" stroke-width="0.6"/></svg>
<svg class="b" style="left:378.2px;top:348.9px" width="7" height="8" viewBox="0 0 7 8"><path d="M0.8 0.6V7.3" stroke="#f50000" stroke-width="1" stroke-opacity="0.75"/><path d="M0.6 0.6H5.8V3.9H0.6Z" fill="#f50000"/></svg>
<svg class="b" style="left:420px;top:345.3px" width="14" height="14" viewBox="0 0 14 14"><circle cx="7.2" cy="7.3" r="6.4" fill="none" stroke="#dcdee2" stroke-width="0.55" stroke-dasharray="0.7 0.6"/><circle cx="6.9" cy="5.9" r="1.5" fill="none" stroke="#ccced3" stroke-width="0.65"/><path d="M4.3 10.4Q4.3 8.1 6.9 8.1 8.2 8.1 8.8 8.7" fill="none" stroke="#ccced3" stroke-width="0.65"/><circle cx="10" cy="10.3" r="2.6" fill="#8a8e95" stroke="#fff" stroke-width="0.5"/><path d="M10 9.2V11.4M8.9 10.3H11.1" stroke="#eceef0" stroke-width="0.6"/></svg>
<div class="b" style="left:453.3px;top:350.5px;width:25.7px;height:5.2px;border:1.1px solid #a6e39d;border-radius:3px;box-sizing:border-box;background:#fff"></div>
<svg class="b" style="left:512.2px;top:345.3px" width="14" height="14" viewBox="0 0 14 14"><circle cx="7.2" cy="7.3" r="6.4" fill="none" stroke="#dcdee2" stroke-width="0.55" stroke-dasharray="0.7 0.6"/><circle cx="6.9" cy="5.9" r="1.5" fill="none" stroke="#ccced3" stroke-width="0.65"/><path d="M4.3 10.4Q4.3 8.1 6.9 8.1 8.2 8.1 8.8 8.7" fill="none" stroke="#ccced3" stroke-width="0.65"/><circle cx="10" cy="10.3" r="2.6" fill="#8a8e95" stroke="#fff" stroke-width="0.5"/><path d="M10 9.2V11.4M8.9 10.3H11.1" stroke="#eceef0" stroke-width="0.6"/></svg>
<div class="b" style="left:543px;top:340.5px;width:63.5px;height:24.5px;background:#e50000"></div>
<div class="b" style="left:606.5px;top:340.5px;width:63.5px;height:24.5px;background:#9b59b6"></div>
<div class="b" style="left:606.2px;top:340.5px;width:0.7px;height:24.5px;background:rgba(255,255,255,0.55)"></div>
<svg class="b" style="left:48px;top:390.0px" width="8" height="8" viewBox="0 0 8 8"><circle cx="3.7" cy="4" r="3.4" fill="none" stroke="#1bbc9c" stroke-opacity="0.75" stroke-width="0.8"/><path d="M2.6 3.6L3.7 4.6 4.8 3.6" fill="none" stroke="#1bbc9c" stroke-width="0.65"/></svg>
<div class="b" style="left:57.8px;top:389.8px;width:44.6px;height:9.3px;background:#1bbc9c;border-radius:2.5px"></div>
<div class="b" style="left:57.5px;top:400.3px;width:627.1px;height:25px;background:linear-gradient(#fff 0, #fff 72%, #f5f6f7 90%, #f1f2f4 100%)"></div>
<svg class="b" style="left:66px;top:409.4px" width="6" height="6" viewBox="0 0 6 6"><rect x="1" y="1.1" width="3.9" height="3.9" rx="1.1" fill="#cfd1d5"/></svg>
<svg class="b" style="left:155.1px;top:410.00000000000006px" width="6" height="6" viewBox="0 0 6 6"><rect x="0.4" y="0.4" width="5.2" height="5.2" rx="1" fill="none" stroke="#b4b8bf" stroke-width="0.6"/><path d="M1.6 3L2.6 4 4.4 1.9" fill="none" stroke="#b4b8bf" stroke-width="0.6"/></svg>
<svg class="b" style="left:235.4px;top:405.1px" width="14" height="14" viewBox="0 0 14 14"><circle cx="7.2" cy="7.3" r="6.4" fill="none" stroke="#dcdee2" stroke-width="0.55" stroke-dasharray="0.7 0.6"/><circle cx="6.9" cy="5.9" r="1.5" fill="none" stroke="#ccced3" stroke-width="0.65"/><path d="M4.3 10.4Q4.3 8.1 6.9 8.1 8.2 8.1 8.8 8.7" fill="none" stroke="#ccced3" stroke-width="0.65"/><circle cx="10" cy="10.3" r="2.6" fill="#8a8e95" stroke="#fff" stroke-width="0.5"/><path d="M10 9.2V11.4M8.9 10.3H11.1" stroke="#eceef0" stroke-width="0.6"/></svg>
<svg class="b" style="left:378.2px;top:408.7px" width="7" height="8" viewBox="0 0 7 8"><path d="M0.8 0.6V7.3" stroke="#f50000" stroke-width="1" stroke-opacity="0.75"/><path d="M0.6 0.6H5.8V3.9H0.6Z" fill="#f50000"/></svg>
<svg class="b" style="left:420px;top:405.1px" width="14" height="14" viewBox="0 0 14 14"><circle cx="7.2" cy="7.3" r="6.4" fill="none" stroke="#dcdee2" stroke-width="0.55" stroke-dasharray="0.7 0.6"/><circle cx="6.9" cy="5.9" r="1.5" fill="none" stroke="#ccced3" stroke-width="0.65"/><path d="M4.3 10.4Q4.3 8.1 6.9 8.1 8.2 8.1 8.8 8.7" fill="none" stroke="#ccced3" stroke-width="0.65"/><circle cx="10" cy="10.3" r="2.6" fill="#8a8e95" stroke="#fff" stroke-width="0.5"/><path d="M10 9.2V11.4M8.9 10.3H11.1" stroke="#eceef0" stroke-width="0.6"/></svg>
<div class="b" style="left:453.3px;top:410.3px;width:25.7px;height:5.2px;border:1.1px solid #a6e39d;border-radius:3px;box-sizing:border-box;background:#fff"></div>
<svg class="b" style="left:512.2px;top:405.1px" width="14" height="14" viewBox="0 0 14 14"><circle cx="7.2" cy="7.3" r="6.4" fill="none" stroke="#dcdee2" stroke-width="0.55" stroke-dasharray="0.7 0.6"/><circle cx="6.9" cy="5.9" r="1.5" fill="none" stroke="#ccced3" stroke-width="0.65"/><path d="M4.3 10.4Q4.3 8.1 6.9 8.1 8.2 8.1 8.8 8.7" fill="none" stroke="#ccced3" stroke-width="0.65"/><circle cx="10" cy="10.3" r="2.6" fill="#8a8e95" stroke="#fff" stroke-width="0.5"/><path d="M10 9.2V11.4M8.9 10.3H11.1" stroke="#eceef0" stroke-width="0.6"/></svg>
<div class="b" style="left:543px;top:400.3px;width:63.5px;height:25px;background:#3082b7"></div>
<div class="b" style="left:606.5px;top:400.3px;width:63.5px;height:25px;background:#1bbc9c"></div>
<div class="b" style="left:606.2px;top:400.3px;width:0.7px;height:25px;background:rgba(255,255,255,0.55)"></div>
<div class="b" style="left:543px;top:424.6px;width:127px;height:0.8px;background:rgba(255,255,255,0.55)"></div>
<div class="b" style="left:57.5px;top:425.3px;width:627.1px;height:24.5px;background:linear-gradient(#f7f8f9 0, #fff 6%, #fff 80%, #f9fafb 100%)"></div>
<svg class="b" style="left:66px;top:434.4px" width="6" height="6" viewBox="0 0 6 6"><rect x="1" y="1.1" width="3.9" height="3.9" rx="1.1" fill="#a26ffd"/></svg>
<svg class="b" style="left:179.6px;top:434.50000000000006px" width="6" height="7" viewBox="0 0 6 7"><circle cx="3" cy="0.9" r="0.8" fill="#f2a100"/><circle cx="1" cy="3.4" r="0.8" fill="#f08a30"/><circle cx="5" cy="3.4" r="0.8" fill="#e05030"/><circle cx="3" cy="6" r="0.8" fill="#d03020"/><path d="M3 0.9L1 3.4 3 6 5 3.4Z" fill="none" stroke="#f0b090" stroke-width="0.4"/></svg>
<svg class="b" style="left:189.1px;top:435.00000000000006px" width="6" height="6" viewBox="0 0 6 6"><rect x="0.4" y="0.4" width="5.2" height="5.2" rx="1" fill="none" stroke="#b4b8bf" stroke-width="0.6"/><path d="M1.6 3L2.6 4 4.4 1.9" fill="none" stroke="#b4b8bf" stroke-width="0.6"/></svg>
<svg class="b" style="left:207.8px;top:435.00000000000006px" width="7" height="6" viewBox="0 0 7 6"><g transform="rotate(-40 3.5 3)"><rect x="0.3" y="1.5" width="6.4" height="3" rx="1.5" fill="none" stroke="#a9adb4" stroke-width="0.9"/><path d="M2.3 3H4.9" stroke="#a9adb4" stroke-width="0.8"/></g></svg>
<svg class="b" style="left:235.4px;top:430.1px" width="14" height="14" viewBox="0 0 14 14"><circle cx="7.2" cy="7.3" r="6.4" fill="none" stroke="#dcdee2" stroke-width="0.55" stroke-dasharray="0.7 0.6"/><circle cx="6.9" cy="5.9" r="1.5" fill="none" stroke="#ccced3" stroke-width="0.65"/><path d="M4.3 10.4Q4.3 8.1 6.9 8.1 8.2 8.1 8.8 8.7" fill="none" stroke="#ccced3" stroke-width="0.65"/><circle cx="10" cy="10.3" r="2.6" fill="#8a8e95" stroke="#fff" stroke-width="0.5"/><path d="M10 9.2V11.4M8.9 10.3H11.1" stroke="#eceef0" stroke-width="0.6"/></svg>
<svg class="b" style="left:378.2px;top:433.7px" width="7" height="8" viewBox="0 0 7 8"><path d="M0.8 0.6V7.3" stroke="#f50000" stroke-width="1" stroke-opacity="0.75"/><path d="M0.6 0.6H5.8V3.9H0.6Z" fill="#f50000"/></svg>
<svg class="b" style="left:420px;top:430.1px" width="14" height="14" viewBox="0 0 14 14"><circle cx="7.2" cy="7.3" r="6.4" fill="none" stroke="#dcdee2" stroke-width="0.55" stroke-dasharray="0.7 0.6"/><circle cx="6.9" cy="5.9" r="1.5" fill="none" stroke="#ccced3" stroke-width="0.65"/><path d="M4.3 10.4Q4.3 8.1 6.9 8.1 8.2 8.1 8.8 8.7" fill="none" stroke="#ccced3" stroke-width="0.65"/><circle cx="10" cy="10.3" r="2.6" fill="#8a8e95" stroke="#fff" stroke-width="0.5"/><path d="M10 9.2V11.4M8.9 10.3H11.1" stroke="#eceef0" stroke-width="0.6"/></svg>
<div class="b" style="left:453.3px;top:435.3px;width:25.7px;height:5.2px;border:1.1px solid #a6e39d;border-radius:3px;box-sizing:border-box;background:#fff"></div>
<svg class="b" style="left:512.2px;top:430.1px" width="14" height="14" viewBox="0 0 14 14"><circle cx="7.2" cy="7.3" r="6.4" fill="none" stroke="#dcdee2" stroke-width="0.55" stroke-dasharray="0.7 0.6"/><circle cx="6.9" cy="5.9" r="1.5" fill="none" stroke="#ccced3" stroke-width="0.65"/><path d="M4.3 10.4Q4.3 8.1 6.9 8.1 8.2 8.1 8.8 8.7" fill="none" stroke="#ccced3" stroke-width="0.65"/><circle cx="10" cy="10.3" r="2.6" fill="#8a8e95" stroke="#fff" stroke-width="0.5"/><path d="M10 9.2V11.4M8.9 10.3H11.1" stroke="#eceef0" stroke-width="0.6"/></svg>
<div class="b" style="left:543px;top:425.3px;width:63.5px;height:24.5px;background:#3082b7"></div>
<div class="b" style="left:606.5px;top:425.3px;width:63.5px;height:24.5px;background:#1bbc9c"></div>
<div class="b" style="left:606.2px;top:425.3px;width:0.7px;height:24.5px;background:rgba(255,255,255,0.55)"></div>
<svg class="b" style="left:0;top:0" width="700" height="483">
<text x="55.60" y="36.60" font-size="8.2" font-weight="700" fill="#3a3e44" textLength="80.60" lengthAdjust="spacingAndGlyphs">Process and Procedure</text>
<text x="160.00" y="36.50" font-size="6.4" font-weight="400" fill="#3c4046" textLength="60.70" lengthAdjust="spacingAndGlyphs" stroke="#3c4046" stroke-width="0.22">Getting Started Guide</text>
<text x="242.00" y="36.50" font-size="6.4" font-weight="400" fill="#3c4046" textLength="51.00" lengthAdjust="spacingAndGlyphs" stroke="#3c4046" stroke-width="0.22">Process Flowchart</text>
<text x="315.00" y="36.50" font-size="6.4" font-weight="400" fill="#7b68ee" textLength="55.30" lengthAdjust="spacingAndGlyphs" stroke="#7b68ee" stroke-width="0.22">Documentation List</text>
<text x="392.00" y="36.50" font-size="6.4" font-weight="400" fill="#3c4046" textLength="60.00" lengthAdjust="spacingAndGlyphs" stroke="#3c4046" stroke-width="0.22">Documentation Stage</text>
<text x="456.60" y="36.50" font-size="6.2" font-weight="400" fill="#7b68ee" textLength="3.40" lengthAdjust="spacingAndGlyphs" stroke="#7b68ee" stroke-width="0.2">2</text>
<text x="487.60" y="36.50" font-size="6.4" font-weight="400" fill="#3c4046" textLength="23.10" lengthAdjust="spacingAndGlyphs" stroke="#3c4046" stroke-width="0.22">Timeline</text>
<text x="535.70" y="36.50" font-size="6.4" font-weight="400" fill="#3c4046" textLength="13.60" lengthAdjust="spacingAndGlyphs" stroke="#3c4046" stroke-width="0.22">View</text>
<text x="603.30" y="36.00" font-size="5.8" font-weight="400" fill="#3c4046" textLength="22.60" lengthAdjust="spacingAndGlyphs" stroke="#3c4046" stroke-width="0.12">Automate</text>
<text x="659.90" y="36.00" font-size="5.8" font-weight="400" fill="#3c4046" textLength="15.10" lengthAdjust="spacingAndGlyphs" stroke="#3c4046" stroke-width="0.12">Share</text>
<text x="47.00" y="55.80" font-size="5.8" font-weight="400" fill="#b7bac1" textLength="38.00" lengthAdjust="spacingAndGlyphs">Search tasks...</text>
<text x="450.30" y="55.60" font-size="5.5" font-weight="400" fill="#3c4046" textLength="11.80" lengthAdjust="spacingAndGlyphs" stroke="#3c4046" stroke-width="0.12">Filter</text>
<text x="478.00" y="55.60" font-size="5.5" font-weight="400" fill="#7b68ee" textLength="53.20" lengthAdjust="spacingAndGlyphs" stroke="#7b68ee" stroke-width="0.1">Group by: Department</text>
<text x="547.20" y="55.60" font-size="5.5" font-weight="400" fill="#3c4046" textLength="21.50" lengthAdjust="spacingAndGlyphs" stroke="#3c4046" stroke-width="0.12">Subtasks</text>
<text x="583.70" y="55.60" font-size="5.6" font-weight="400" fill="#858a93" textLength="7.80" lengthAdjust="spacingAndGlyphs" stroke="#858a93" stroke-width="0.1">Me</text>
<text x="607.00" y="55.60" font-size="5.6" font-weight="400" fill="#858a93" textLength="26.50" lengthAdjust="spacingAndGlyphs" stroke="#858a93" stroke-width="0.1">Assignees</text>
<text x="649.70" y="55.60" font-size="5.5" font-weight="400" fill="#3c4046" textLength="13.30" lengthAdjust="spacingAndGlyphs" stroke="#3c4046" stroke-width="0.12">Show</text>
<text x="53.60" y="78.70" font-size="8.2" font-weight="700" fill="#3a3e44" textLength="79.40" lengthAdjust="spacingAndGlyphs">Process and Procedure</text>
<text x="148.40" y="77.90" font-size="5.1" font-weight="400" fill="#c3c6cc" textLength="30.60" lengthAdjust="spacingAndGlyphs">+ NEW TASK</text>
<text x="643.80" y="78.00" font-size="5.1" font-weight="700" fill="#a9adb4" textLength="33.60" lengthAdjust="spacingAndGlyphs">HIDE CLOSED</text>
<text x="64.85" y="103.00" font-size="5.4" font-weight="400" fill="#fff" text-anchor="middle" textLength="7.20" lengthAdjust="spacingAndGlyphs" stroke="#fff" stroke-width="0.22" fill-opacity="0.93">HR</text>
<text x="78.40" y="102.90" font-size="4.9" font-weight="400" fill="#b3b6bd" textLength="18.80" lengthAdjust="spacingAndGlyphs">5 TASKS</text>
<text x="231.40" y="102.90" font-size="4.9" font-weight="400" fill="#aeb2b9" textLength="22.80" lengthAdjust="spacingAndGlyphs">ASSIGNEE</text>
<text x="275.10" y="102.90" font-size="4.9" font-weight="400" fill="#aeb2b9" textLength="27.80" lengthAdjust="spacingAndGlyphs">START DATE</text>
<text x="323.60" y="102.90" font-size="4.9" font-weight="400" fill="#aeb2b9" textLength="22.80" lengthAdjust="spacingAndGlyphs">DUE DATE</text>
<text x="370.50" y="102.90" font-size="4.9" font-weight="400" fill="#aeb2b9" textLength="21.70" lengthAdjust="spacingAndGlyphs">PRIORITY</text>
<text x="408.00" y="102.90" font-size="4.9" font-weight="400" fill="#aeb2b9" textLength="38.70" lengthAdjust="spacingAndGlyphs">STAKEHOLDER/S</text>
<text x="451.90" y="102.90" font-size="4.9" font-weight="400" fill="#aeb2b9" textLength="42.10" lengthAdjust="spacingAndGlyphs">COMPLETION RA...</text>
<text x="507.50" y="102.90" font-size="4.9" font-weight="400" fill="#aeb2b9" textLength="24.50" lengthAdjust="spacingAndGlyphs">APPROVER</text>
<text x="546.60" y="102.90" font-size="4.9" font-weight="400" fill="#aeb2b9" textLength="56.60" lengthAdjust="spacingAndGlyphs">DOCUMENTATION STAGE</text>
<text x="622.90" y="102.90" font-size="4.9" font-weight="400" fill="#aeb2b9" textLength="31.40" lengthAdjust="spacingAndGlyphs">DEPARTMENT</text>
<text x="678.60" y="102.90" font-size="4.9" font-weight="400" fill="#aeb2b9" textLength="7.00" lengthAdjust="spacingAndGlyphs">TY</text>
<text x="77.10" y="121.60" font-size="6.5" font-weight="400" fill="#2c3036" textLength="63.10" lengthAdjust="spacingAndGlyphs" stroke="#2c3036" stroke-width="0.16">HR Reporting Process</text>
<text x="150.60" y="121.10" font-size="5.2" font-weight="400" fill="#979ba3" textLength="8.20" lengthAdjust="spacingAndGlyphs" stroke="#979ba3" stroke-width="0.05">0/6</text>
<text x="288.70" y="120.80" font-size="5.6" font-weight="400" fill="#2f3338" text-anchor="middle" textLength="13.70" lengthAdjust="spacingAndGlyphs" stroke="#2f3338" stroke-width="0.1">Nov 7</text>
<text x="334.60" y="120.80" font-size="5.6" font-weight="400" fill="#2f3338" text-anchor="middle" textLength="17.40" lengthAdjust="spacingAndGlyphs" stroke="#2f3338" stroke-width="0.1">Nov 25</text>
<text x="481.90" y="121.10" font-size="5.3" font-weight="400" fill="#74cf68" textLength="7.40" lengthAdjust="spacingAndGlyphs" stroke="#74cf68" stroke-width="0.12">0%</text>
<text x="574.80" y="120.50" font-size="5.9" font-weight="400" fill="#ffffff" text-anchor="middle" textLength="31.00" lengthAdjust="spacingAndGlyphs" stroke="#ffffff" stroke-width="0.06" fill-opacity="0.9">RESEARCH</text>
<text x="638.50" y="120.50" font-size="5.9" font-weight="400" fill="#ffffff" text-anchor="middle" textLength="7.90" lengthAdjust="spacingAndGlyphs" stroke="#ffffff" stroke-width="0.06" fill-opacity="0.9">HR</text>
<text x="77.10" y="146.60" font-size="6.5" font-weight="400" fill="#2c3036" textLength="44.00" lengthAdjust="spacingAndGlyphs" stroke="#2c3036" stroke-width="0.16">Payroll Process</text>
<text x="131.40" y="146.10" font-size="5.2" font-weight="400" fill="#979ba3" textLength="8.20" lengthAdjust="spacingAndGlyphs" stroke="#979ba3" stroke-width="0.05">0/6</text>
<text x="288.70" y="145.80" font-size="5.6" font-weight="400" fill="#2f3338" text-anchor="middle" textLength="15.50" lengthAdjust="spacingAndGlyphs" stroke="#2f3338" stroke-width="0.1">Oct 17</text>
<text x="334.60" y="145.80" font-size="5.6" font-weight="400" fill="#2f3338" text-anchor="middle" textLength="14.10" lengthAdjust="spacingAndGlyphs" stroke="#2f3338" stroke-width="0.1">Nov 4</text>
<text x="481.90" y="146.10" font-size="5.3" font-weight="400" fill="#74cf68" textLength="7.40" lengthAdjust="spacingAndGlyphs" stroke="#74cf68" stroke-width="0.12">0%</text>
<text x="574.80" y="145.50" font-size="5.9" font-weight="400" fill="#ffffff" text-anchor="middle" textLength="31.00" lengthAdjust="spacingAndGlyphs" stroke="#ffffff" stroke-width="0.06" fill-opacity="0.9">RESEARCH</text>
<text x="638.50" y="145.50" font-size="5.9" font-weight="400" fill="#ffffff" text-anchor="middle" textLength="7.90" lengthAdjust="spacingAndGlyphs" stroke="#ffffff" stroke-width="0.06" fill-opacity="0.9">HR</text>
<text x="77.10" y="171.60" font-size="6.5" font-weight="400" fill="#2c3036" textLength="90.80" lengthAdjust="spacingAndGlyphs" stroke="#2c3036" stroke-width="0.16">Employee Engagement Process</text>
<text x="188.70" y="171.10" font-size="5.2" font-weight="400" fill="#979ba3" textLength="8.20" lengthAdjust="spacingAndGlyphs" stroke="#979ba3" stroke-width="0.05">0/6</text>
<text x="288.70" y="170.80" font-size="5.6" font-weight="400" fill="#2f3338" text-anchor="middle" textLength="10.70" lengthAdjust="spacingAndGlyphs" stroke="#2f3338" stroke-width="0.1">Mon</text>
<text x="334.60" y="170.80" font-size="5.6" font-weight="400" fill="#2f3338" text-anchor="middle" textLength="16.00" lengthAdjust="spacingAndGlyphs" stroke="#2f3338" stroke-width="0.1">Oct 14</text>
<text x="481.90" y="171.10" font-size="5.3" font-weight="400" fill="#74cf68" textLength="7.40" lengthAdjust="spacingAndGlyphs" stroke="#74cf68" stroke-width="0.12">0%</text>
<text x="574.80" y="170.50" font-size="5.9" font-weight="400" fill="#ffffff" text-anchor="middle" textLength="44.20" lengthAdjust="spacingAndGlyphs" stroke="#ffffff" stroke-width="0.06" fill-opacity="0.9">FOR APPROVAL</text>
<text x="638.50" y="170.50" font-size="5.9" font-weight="400" fill="#ffffff" text-anchor="middle" textLength="7.90" lengthAdjust="spacingAndGlyphs" stroke="#ffffff" stroke-width="0.06" fill-opacity="0.9">HR</text>
<text x="77.10" y="196.60" font-size="6.5" font-weight="400" fill="#2c3036" textLength="60.10" lengthAdjust="spacingAndGlyphs" stroke="#2c3036" stroke-width="0.16">Recruitment Process</text>
<text x="147.70" y="196.10" font-size="5.2" font-weight="400" fill="#979ba3" textLength="8.20" lengthAdjust="spacingAndGlyphs" stroke="#979ba3" stroke-width="0.05">0/6</text>
<text x="288.70" y="195.80" font-size="5.6" font-weight="400" fill="#2f3338" text-anchor="middle" textLength="10.70" lengthAdjust="spacingAndGlyphs" stroke="#2f3338" stroke-width="0.1">Mon</text>
<text x="334.60" y="195.80" font-size="5.6" font-weight="400" fill="#2f3338" text-anchor="middle" textLength="16.00" lengthAdjust="spacingAndGlyphs" stroke="#2f3338" stroke-width="0.1">Oct 14</text>
<text x="481.90" y="196.10" font-size="5.3" font-weight="400" fill="#74cf68" textLength="7.40" lengthAdjust="spacingAndGlyphs" stroke="#74cf68" stroke-width="0.12">0%</text>
<text x="574.80" y="195.50" font-size="5.9" font-weight="400" fill="#ffffff" text-anchor="middle" textLength="41.00" lengthAdjust="spacingAndGlyphs" stroke="#ffffff" stroke-width="0.06" fill-opacity="0.9">FOR REVISION</text>
<text x="638.50" y="195.50" font-size="5.9" font-weight="400" fill="#ffffff" text-anchor="middle" textLength="7.90" lengthAdjust="spacingAndGlyphs" stroke="#ffffff" stroke-width="0.06" fill-opacity="0.9">HR</text>
<text x="77.10" y="221.60" font-size="6.5" font-weight="400" fill="#2c3036" textLength="76.10" lengthAdjust="spacingAndGlyphs" stroke="#2c3036" stroke-width="0.16">Team Onboarding Process</text>
<text x="163.40" y="221.10" font-size="5.2" font-weight="400" fill="#979ba3" textLength="8.20" lengthAdjust="spacingAndGlyphs" stroke="#979ba3" stroke-width="0.05">0/6</text>
<text x="288.70" y="220.80" font-size="5.6" font-weight="400" fill="#2f3338" text-anchor="middle" textLength="15.50" lengthAdjust="spacingAndGlyphs" stroke="#2f3338" stroke-width="0.1">Oct 17</text>
<text x="334.60" y="220.80" font-size="5.6" font-weight="400" fill="#2f3338" text-anchor="middle" textLength="14.10" lengthAdjust="spacingAndGlyphs" stroke="#2f3338" stroke-width="0.1">Nov 4</text>
<text x="481.90" y="221.10" font-size="5.3" font-weight="400" fill="#74cf68" textLength="7.40" lengthAdjust="spacingAndGlyphs" stroke="#74cf68" stroke-width="0.12">0%</text>
<text x="574.80" y="220.50" font-size="5.9" font-weight="400" fill="#ffffff" text-anchor="middle" textLength="31.00" lengthAdjust="spacingAndGlyphs" stroke="#ffffff" stroke-width="0.06" fill-opacity="0.9">RESEARCH</text>
<text x="638.50" y="220.50" font-size="5.9" font-weight="400" fill="#ffffff" text-anchor="middle" textLength="7.90" lengthAdjust="spacingAndGlyphs" stroke="#ffffff" stroke-width="0.06" fill-opacity="0.9">HR</text>
<text x="65.30" y="238.90" font-size="5.5" font-weight="400" fill="#9fa3ab" textLength="26.50" lengthAdjust="spacingAndGlyphs" stroke="#9fa3ab" stroke-width="0.12">+ New task</text>
<text x="73.30" y="261.10" font-size="5.4" font-weight="400" fill="#fff" text-anchor="middle" textLength="24.50" lengthAdjust="spacingAndGlyphs" stroke="#fff" stroke-width="0.22" fill-opacity="0.93">SUPPORT</text>
<text x="96.00" y="261.00" font-size="4.9" font-weight="400" fill="#b3b6bd" textLength="19.00" lengthAdjust="spacingAndGlyphs">4 TASKS</text>
<text x="231.40" y="261.00" font-size="4.9" font-weight="400" fill="#aeb2b9" textLength="22.80" lengthAdjust="spacingAndGlyphs">ASSIGNEE</text>
<text x="275.10" y="261.00" font-size="4.9" font-weight="400" fill="#aeb2b9" textLength="27.80" lengthAdjust="spacingAndGlyphs">START DATE</text>
<text x="323.60" y="261.00" font-size="4.9" font-weight="400" fill="#aeb2b9" textLength="22.80" lengthAdjust="spacingAndGlyphs">DUE DATE</text>
<text x="370.50" y="261.00" font-size="4.9" font-weight="400" fill="#aeb2b9" textLength="21.70" lengthAdjust="spacingAndGlyphs">PRIORITY</text>
<text x="408.00" y="261.00" font-size="4.9" font-weight="400" fill="#aeb2b9" textLength="38.70" lengthAdjust="spacingAndGlyphs">STAKEHOLDER/S</text>
<text x="451.90" y="261.00" font-size="4.9" font-weight="400" fill="#aeb2b9" textLength="42.10" lengthAdjust="spacingAndGlyphs">COMPLETION RA...</text>
<text x="507.50" y="261.00" font-size="4.9" font-weight="400" fill="#aeb2b9" textLength="24.50" lengthAdjust="spacingAndGlyphs">APPROVER</text>
<text x="546.60" y="261.00" font-size="4.9" font-weight="400" fill="#aeb2b9" textLength="56.60" lengthAdjust="spacingAndGlyphs">DOCUMENTATION STAGE</text>
<text x="622.90" y="261.00" font-size="4.9" font-weight="400" fill="#aeb2b9" textLength="31.40" lengthAdjust="spacingAndGlyphs">DEPARTMENT</text>
<text x="678.60" y="261.00" font-size="4.9" font-weight="400" fill="#aeb2b9" textLength="7.00" lengthAdjust="spacingAndGlyphs">TY</text>
<text x="77.10" y="280.60" font-size="6.5" font-weight="400" fill="#2c3036" textLength="77.90" lengthAdjust="spacingAndGlyphs" stroke="#2c3036" stroke-width="0.16">Customer Support Process</text>
<text x="165.70" y="280.10" font-size="5.2" font-weight="400" fill="#979ba3" textLength="8.20" lengthAdjust="spacingAndGlyphs" stroke="#979ba3" stroke-width="0.05">0/6</text>
<text x="288.70" y="279.80" font-size="5.6" font-weight="400" fill="#2f3338" text-anchor="middle" textLength="10.70" lengthAdjust="spacingAndGlyphs" stroke="#2f3338" stroke-width="0.1">Mon</text>
<text x="334.60" y="279.80" font-size="5.6" font-weight="400" fill="#2f3338" text-anchor="middle" textLength="16.00" lengthAdjust="spacingAndGlyphs" stroke="#2f3338" stroke-width="0.1">Oct 14</text>
<text x="481.90" y="280.10" font-size="5.3" font-weight="400" fill="#74cf68" textLength="7.40" lengthAdjust="spacingAndGlyphs" stroke="#74cf68" stroke-width="0.12">0%</text>
<text x="574.80" y="279.50" font-size="5.9" font-weight="400" fill="#ffffff" text-anchor="middle" textLength="52.20" lengthAdjust="spacingAndGlyphs" stroke="#ffffff" stroke-width="0.06" fill-opacity="0.9">DOCUMENTATION</text>
<text x="638.50" y="279.50" font-size="5.9" font-weight="400" fill="#ffffff" text-anchor="middle" textLength="27.40" lengthAdjust="spacingAndGlyphs" stroke="#ffffff" stroke-width="0.06" fill-opacity="0.9">SUPPORT</text>
<text x="77.10" y="305.60" font-size="6.5" font-weight="400" fill="#2c3036" textLength="77.90" lengthAdjust="spacingAndGlyphs" stroke="#2c3036" stroke-width="0.16">Support Reporting Process</text>
<text x="165.70" y="305.10" font-size="5.2" font-weight="400" fill="#979ba3" textLength="8.20" lengthAdjust="spacingAndGlyphs" stroke="#979ba3" stroke-width="0.05">0/6</text>
<text x="288.70" y="304.80" font-size="5.6" font-weight="400" fill="#2f3338" text-anchor="middle" textLength="13.70" lengthAdjust="spacingAndGlyphs" stroke="#2f3338" stroke-width="0.1">Nov 7</text>
<text x="334.60" y="304.80" font-size="5.6" font-weight="400" fill="#2f3338" text-anchor="middle" textLength="17.40" lengthAdjust="spacingAndGlyphs" stroke="#2f3338" stroke-width="0.1">Nov 25</text>
<text x="481.90" y="305.10" font-size="5.3" font-weight="400" fill="#74cf68" textLength="7.40" lengthAdjust="spacingAndGlyphs" stroke="#74cf68" stroke-width="0.12">0%</text>
<text x="574.80" y="304.50" font-size="5.9" font-weight="400" fill="#ffffff" text-anchor="middle" textLength="52.20" lengthAdjust="spacingAndGlyphs" stroke="#ffffff" stroke-width="0.06" fill-opacity="0.9">DOCUMENTATION</text>
<text x="638.50" y="304.50" font-size="5.9" font-weight="400" fill="#ffffff" text-anchor="middle" textLength="27.40" lengthAdjust="spacingAndGlyphs" stroke="#ffffff" stroke-width="0.06" fill-opacity="0.9">SUPPORT</text>
<text x="77.10" y="330.60" font-size="6.5" font-weight="400" fill="#2c3036" textLength="87.90" lengthAdjust="spacingAndGlyphs" stroke="#2c3036" stroke-width="0.16">Product Development Process</text>
<text x="175.70" y="330.10" font-size="5.2" font-weight="400" fill="#979ba3" textLength="8.20" lengthAdjust="spacingAndGlyphs" stroke="#979ba3" stroke-width="0.05">0/6</text>
<text x="288.70" y="329.80" font-size="5.6" font-weight="400" fill="#2f3338" text-anchor="middle" textLength="26.50" lengthAdjust="spacingAndGlyphs" stroke="#2f3338" stroke-width="0.1">3 days ago</text>
<text x="334.60" y="329.80" font-size="5.6" font-weight="400" fill="#2f3338" text-anchor="middle" textLength="13.50" lengthAdjust="spacingAndGlyphs" stroke="#2f3338" stroke-width="0.1">Oct 7</text>
<text x="481.90" y="330.10" font-size="5.3" font-weight="400" fill="#74cf68" textLength="7.40" lengthAdjust="spacingAndGlyphs" stroke="#74cf68" stroke-width="0.12">0%</text>
<text x="574.80" y="329.50" font-size="5.9" font-weight="400" fill="#ffffff" text-anchor="middle" textLength="12.40" lengthAdjust="spacingAndGlyphs" stroke="#ffffff" stroke-width="0.06" fill-opacity="0.9">LIVE</text>
<text x="638.50" y="329.50" font-size="5.9" font-weight="400" fill="#ffffff" text-anchor="middle" textLength="27.40" lengthAdjust="spacingAndGlyphs" stroke="#ffffff" stroke-width="0.06" fill-opacity="0.9">SUPPORT</text>
<text x="77.10" y="350.70" font-size="6.5" font-weight="400" fill="#2c3036" textLength="111.60" lengthAdjust="spacingAndGlyphs" stroke="#2c3036" stroke-width="0.16">Customer Warranty Mitigation Process</text>
<text x="84.90" y="361.40" font-size="5.2" font-weight="400" fill="#979ba3" textLength="8.20" lengthAdjust="spacingAndGlyphs" stroke="#979ba3" stroke-width="0.05">0/6</text>
<text x="288.70" y="354.80" font-size="5.6" font-weight="400" fill="#2f3338" text-anchor="middle" textLength="26.50" lengthAdjust="spacingAndGlyphs" stroke="#2f3338" stroke-width="0.1">3 days ago</text>
<text x="334.60" y="354.80" font-size="5.6" font-weight="400" fill="#2f3338" text-anchor="middle" textLength="13.50" lengthAdjust="spacingAndGlyphs" stroke="#2f3338" stroke-width="0.1">Oct 7</text>
<text x="481.90" y="355.10" font-size="5.3" font-weight="400" fill="#74cf68" textLength="7.40" lengthAdjust="spacingAndGlyphs" stroke="#74cf68" stroke-width="0.12">0%</text>
<text x="574.80" y="354.50" font-size="5.9" font-weight="400" fill="#ffffff" text-anchor="middle" textLength="41.00" lengthAdjust="spacingAndGlyphs" stroke="#ffffff" stroke-width="0.06" fill-opacity="0.9">FOR REVISION</text>
<text x="638.50" y="354.50" font-size="5.9" font-weight="400" fill="#ffffff" text-anchor="middle" textLength="27.40" lengthAdjust="spacingAndGlyphs" stroke="#ffffff" stroke-width="0.06" fill-opacity="0.9">SUPPORT</text>
<text x="65.30" y="374.20" font-size="5.5" font-weight="400" fill="#9fa3ab" textLength="26.50" lengthAdjust="spacingAndGlyphs" stroke="#9fa3ab" stroke-width="0.12">+ New task</text>
<text x="80.10" y="396.40" font-size="5.4" font-weight="400" fill="#fff" text-anchor="middle" textLength="37.20" lengthAdjust="spacingAndGlyphs" stroke="#fff" stroke-width="0.22" fill-opacity="0.93">SUPPLY CHAIN</text>
<text x="109.40" y="396.30" font-size="4.9" font-weight="400" fill="#b3b6bd" textLength="18.60" lengthAdjust="spacingAndGlyphs">2 TASKS</text>
<text x="231.40" y="396.30" font-size="4.9" font-weight="400" fill="#aeb2b9" textLength="22.80" lengthAdjust="spacingAndGlyphs">ASSIGNEE</text>
<text x="275.10" y="396.30" font-size="4.9" font-weight="400" fill="#aeb2b9" textLength="27.80" lengthAdjust="spacingAndGlyphs">START DATE</text>
<text x="323.60" y="396.30" font-size="4.9" font-weight="400" fill="#aeb2b9" textLength="22.80" lengthAdjust="spacingAndGlyphs">DUE DATE</text>
<text x="370.50" y="396.30" font-size="4.9" font-weight="400" fill="#aeb2b9" textLength="21.70" lengthAdjust="spacingAndGlyphs">PRIORITY</text>
<text x="408.00" y="396.30" font-size="4.9" font-weight="400" fill="#aeb2b9" textLength="38.70" lengthAdjust="spacingAndGlyphs">STAKEHOLDER/S</text>
<text x="451.90" y="396.30" font-size="4.9" font-weight="400" fill="#aeb2b9" textLength="42.10" lengthAdjust="spacingAndGlyphs">COMPLETION RA...</text>
<text x="507.50" y="396.30" font-size="4.9" font-weight="400" fill="#aeb2b9" textLength="24.50" lengthAdjust="spacingAndGlyphs">APPROVER</text>
<text x="546.60" y="396.30" font-size="4.9" font-weight="400" fill="#aeb2b9" textLength="56.60" lengthAdjust="spacingAndGlyphs">DOCUMENTATION STAGE</text>
<text x="622.90" y="396.30" font-size="4.9" font-weight="400" fill="#aeb2b9" textLength="31.40" lengthAdjust="spacingAndGlyphs">DEPARTMENT</text>
<text x="678.60" y="396.30" font-size="4.9" font-weight="400" fill="#aeb2b9" textLength="7.00" lengthAdjust="spacingAndGlyphs">TY</text>
<text x="77.10" y="415.40" font-size="6.5" font-weight="400" fill="#2c3036" textLength="75.00" lengthAdjust="spacingAndGlyphs" stroke="#2c3036" stroke-width="0.16">Product Logistics Process</text>
<text x="162.90" y="414.90" font-size="5.2" font-weight="400" fill="#979ba3" textLength="8.20" lengthAdjust="spacingAndGlyphs" stroke="#979ba3" stroke-width="0.05">0/6</text>
<text x="288.70" y="414.60" font-size="5.6" font-weight="400" fill="#2f3338" text-anchor="middle" textLength="10.70" lengthAdjust="spacingAndGlyphs" stroke="#2f3338" stroke-width="0.1">Mon</text>
<text x="334.60" y="414.60" font-size="5.6" font-weight="400" fill="#2f3338" text-anchor="middle" textLength="16.00" lengthAdjust="spacingAndGlyphs" stroke="#2f3338" stroke-width="0.1">Oct 14</text>
<text x="481.90" y="414.90" font-size="5.3" font-weight="400" fill="#74cf68" textLength="7.40" lengthAdjust="spacingAndGlyphs" stroke="#74cf68" stroke-width="0.12">0%</text>
<text x="574.80" y="414.30" font-size="5.9" font-weight="400" fill="#ffffff" text-anchor="middle" textLength="52.20" lengthAdjust="spacingAndGlyphs" stroke="#ffffff" stroke-width="0.06" fill-opacity="0.9">DOCUMENTATION</text>
<text x="638.50" y="414.30" font-size="5.9" font-weight="400" fill="#ffffff" text-anchor="middle" textLength="43.00" lengthAdjust="spacingAndGlyphs" stroke="#ffffff" stroke-width="0.06" fill-opacity="0.9">SUPPLY CHAIN</text>
<text x="77.10" y="440.40" font-size="6.5" font-weight="400" fill="#2c3036" textLength="98.70" lengthAdjust="spacingAndGlyphs" stroke="#2c3036" stroke-width="0.16">Supply Chain Forecasting Process</text>
<text x="196.60" y="439.90" font-size="5.2" font-weight="400" fill="#979ba3" textLength="8.20" lengthAdjust="spacingAndGlyphs" stroke="#979ba3" stroke-width="0.05">0/6</text>
<text x="288.70" y="439.60" font-size="5.6" font-weight="400" fill="#2f3338" text-anchor="middle" textLength="26.50" lengthAdjust="spacingAndGlyphs" stroke="#2f3338" stroke-width="0.1">3 days ago</text>
<text x="334.60" y="439.60" font-size="5.6" font-weight="400" fill="#2f3338" text-anchor="middle" textLength="13.50" lengthAdjust="spacingAndGlyphs" stroke="#2f3338" stroke-width="0.1">Oct 7</text>
<text x="481.90" y="439.90" font-size="5.3" font-weight="400" fill="#74cf68" textLength="7.40" lengthAdjust="spacingAndGlyphs" stroke="#74cf68" stroke-width="0.12">0%</text>
<text x="574.80" y="439.30" font-size="5.9" font-weight="400" fill="#ffffff" text-anchor="middle" textLength="52.20" lengthAdjust="spacingAndGlyphs" stroke="#ffffff" stroke-width="0.06" fill-opacity="0.9">DOCUMENTATION</text>
<text x="638.50" y="439.30" font-size="5.9" font-weight="400" fill="#ffffff" text-anchor="middle" textLength="43.00" lengthAdjust="spacingAndGlyphs" stroke="#ffffff" stroke-width="0.06" fill-opacity="0.9">SUPPLY CHAIN</text>
<text x="65.30" y="458.20" font-size="5.5" font-weight="400" fill="#9fa3ab" textLength="26.50" lengthAdjust="spacingAndGlyphs" stroke="#9fa3ab" stroke-width="0.12">+ New task</text>
</svg>
<div class="b" style="left:634.8px;top:437px;width:26.7px;height:13.5px;background:#7b68ee;border-radius:3.5px;box-shadow:0 1.5px 3px rgba(123,104,238,0.45)"></div>
<svg class="b" style="left:638.3px;top:441.5px" width="5" height="5" viewBox="0 0 5 5"><path d="M2.5 0.3V4.7M0.3 2.5H4.7" stroke="#fff" stroke-width="0.9"/></svg>
<svg class="b" style="left:0;top:0" width="700" height="483"><text x="647" y="445.8" font-size="5.6" font-weight="400" fill="#fff" stroke="#fff" stroke-width="0.2" textLength="10.5" lengthAdjust="spacingAndGlyphs">Task</text></svg>
<div class="b" style="left:665.5px;top:437px;width:13.5px;height:13.5px;background:#fff;border-radius:3.5px;box-shadow:0 1px 3px rgba(0,0,0,0.15)"></div>
<svg class="b" style="left:669px;top:440.5px" width="7" height="7" viewBox="0 0 7 7"><circle cx="1.7" cy="1.7" r="1.5" fill="#ff7fab"/><circle cx="5.2" cy="1.7" r="1.5" fill="#ffc53d"/><circle cx="1.7" cy="5.2" r="1.5" fill="#4fd1a5"/><circle cx="5.2" cy="5.2" r="1.5" fill="#5b9cff"/></svg>
<div class="b" style="left:0px;top:455.5px;width:700px;height:28px;background:#e8e9ee"></div>
<div class="b" style="left:684.6px;top:0px;width:16px;height:483px;background:#e8e9ee"></div>
</body></html>
